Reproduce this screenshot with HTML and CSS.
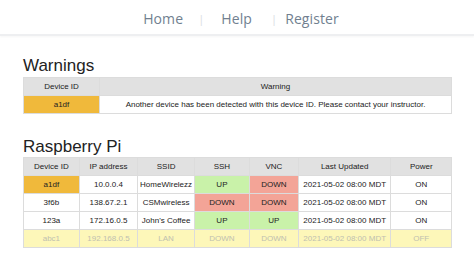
FILE: index.html
```html
<!DOCTYPE html>
<html lang="en">

<head>
    <meta charset="UTF-8">
    <meta name="viewport" content="width=device-width, initial-scale=1.0">
    <title>Device Status</title>
    <link rel="stylesheet" href="styles.css">
</head>

<body>

    <div class="nav">
        <a href="#">Home</a>
        <span class="sep sep-first">|</span>
        <a href="#">Help</a>
        <span class="sep sep-second">|</span>
        <a href="#">Register</a>
    </div>

    <div class="content">
        <h2>Warnings</h2>
        <table class="warn-table">
            <tr>
                <th class="col-id">Device ID</th>
                <th>Warning</th>
            </tr>
            <tr>
                <td class="orange">a1df</td>
                <td>Another device has been detected with this device ID. Please contact your instructor.</td>
            </tr>
        </table>

        <h2 class="pi-title">Raspberry Pi</h2>
        <table class="pi-table">
            <tr>
                <th class="c1">Device ID</th>
                <th class="c2">IP address</th>
                <th class="c3">SSID</th>
                <th class="c4">SSH</th>
                <th class="c5">VNC</th>
                <th class="c6">Last Updated</th>
                <th class="c7">Power</th>
            </tr>
            <tr>
                <td class="orange">a1df</td>
                <td>10.0.0.4</td>
                <td>HomeWirelezz</td>
                <td class="up">UP</td>
                <td class="down">DOWN</td>
                <td>2021-05-02 08:00 MDT</td>
                <td>ON</td>
            </tr>
            <tr>
                <td>3f6b</td>
                <td>138.67.2.1</td>
                <td>CSMwireless</td>
                <td class="down">DOWN</td>
                <td class="down">DOWN</td>
                <td>2021-05-02 08:00 MDT</td>
                <td>ON</td>
            </tr>
            <tr>
                <td>123a</td>
                <td>172.16.0.5</td>
                <td>John's Coffee</td>
                <td class="up">UP</td>
                <td class="up">UP</td>
                <td>2021-05-02 08:00 MDT</td>
                <td>ON</td>
            </tr>
            <tr class="offline">
                <td>abc1</td>
                <td>192.168.0.5</td>
                <td>LAN</td>
                <td>DOWN</td>
                <td>DOWN</td>
                <td>2021-05-02 08:00 MDT</td>
                <td>OFF</td>
            </tr>
        </table>
    </div>

</body>

</html>
```

FILE: styles.css
```css
body {
    margin: 0;
    background-color: #fff;
    font-family: 'Liberation Sans', Arial, sans-serif;
    color: #222;
}

.nav {
    height: 36px;
    border-bottom: 2px solid #eeeff1;
    box-shadow: 0 1px 2px rgba(0, 0, 0, 0.04);
    display: flex;
    justify-content: center;
    align-items: center;
    padding: 3px 0 0 8px;
    box-sizing: border-box;
    font-family: 'Open Sans', sans-serif;
    font-size: 14px;
    letter-spacing: 0.1px;
}

.nav a {
    color: #717f90;
    text-decoration: none;
}

.nav .sep {
    color: #d8dce1;
    font-size: 11px;
}

.sep-first {
    margin: 0 17px 0 15px;
}

.sep-second {
    margin: 0 8px 0 19px;
}

.content {
    padding: 0 22px 0 23px;
}

h2 {
    font-weight: normal;
    font-size: 17px;
    margin: 20px 0 1px;
    line-height: 20px;
}

.pi-title {
    margin-top: 23px;
    margin-bottom: 0;
}

table {
    border-collapse: collapse;
    width: 429px;
    font-size: 8px;
}

th,
td {
    border: 1px solid #dcdcdc;
    text-align: center;
    padding: 0;
    height: 17px;
    font-weight: normal;
}

th {
    background-color: #e1e1e1;
}

.warn-table .col-id {
    width: 75px;
}

.orange {
    background-color: #f0b93b;
}

.up {
    background-color: #c9f2a9;
}

.down {
    background-color: #f3a497;
}

.offline td {
    background-color: #fdf7b9;
    color: #c0c0b0;
}

.c1 { width: 56px; }
.c2 { width: 58px; }
.c3 { width: 56px; }
.c4 { width: 55px; }
.c5 { width: 49px; }
.c6 { width: 94px; }
.c7 { width: 61px; }
```
